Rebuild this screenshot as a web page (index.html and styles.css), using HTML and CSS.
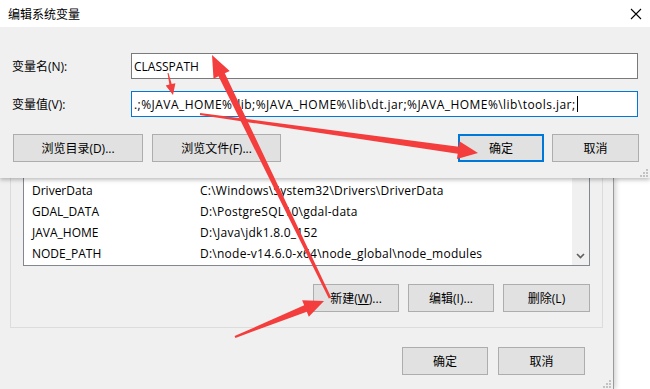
FILE: index.html
```html
<!DOCTYPE html>
<html lang="zh-CN">
<head>
  <meta charset="UTF-8" />
  <title>编辑系统变量</title>
  <link rel="stylesheet" href="styles.css">
</head>
<body>

  <div class="front">
    <div class="titlebar">
      <span class="title">编辑系统变量</span>
      <svg class="close" width="20" height="20" viewBox="0 0 20 20">
        <path d="M5 5 L15 15 M15 5 L5 15" stroke="#000" stroke-width="1.1" fill="none" />
      </svg>
    </div>
    <div class="dlg-body">
      <div class="fields">
        <div class="field">
          <span class="label">变量名(N):</span>
          <div class="input">CLASSPATH</div>
        </div>
        <div class="field">
          <span class="label">变量值(V):</span>
          <div class="input focus">.;%JAVA_HOME%\lib;%JAVA_HOME%\lib\dt.jar;%JAVA_HOME%\lib\tools.jar;<span class="caret"></span></div>
        </div>
      </div>
      <div class="btn-row">
        <div class="btn-group">
          <button class="btn w130">浏览目录(D)...</button>
          <button class="btn w129">浏览文件(F)...</button>
        </div>
        <div class="btn-group tight">
          <button class="btn w86 default">确定</button>
          <button class="btn w87">取消</button>
        </div>
      </div>
      <svg class="grip" width="9" height="9" viewBox="0 0 9 9">
        <rect x="6" y="0" width="2" height="2" fill="#c2c2c2" />
        <rect x="3" y="3" width="2" height="2" fill="#c2c2c2" />
        <rect x="6" y="3" width="2" height="2" fill="#c2c2c2" />
        <rect x="0" y="6" width="2" height="2" fill="#c2c2c2" />
        <rect x="3" y="6" width="2" height="2" fill="#c2c2c2" />
        <rect x="6" y="6" width="2" height="2" fill="#c2c2c2" />
      </svg>
    </div>
  </div>

  <div class="back">
    <div class="window">
      <div class="group">
        <div class="list">
          <div class="rows">
            <div class="row"><span class="name">DriverData</span><span class="path">C:\Windows\System32\Drivers\DriverData</span></div>
            <div class="row"><span class="name">GDAL_DATA</span><span class="path">D:\PostgreSQL10\gdal-data</span></div>
            <div class="row"><span class="name">JAVA_HOME</span><span class="path">D:\Java\jdk1.8.0_152</span></div>
            <div class="row"><span class="name">NODE_PATH</span><span class="path">D:\node-v14.6.0-x64\node_global\node_modules</span></div>
          </div>
          <div class="scrollbar">
            <svg width="17" height="17" viewBox="0 0 17 17">
              <path d="M5 7 L8.5 10.5 L12 7" stroke="#606060" stroke-width="1.6" fill="none" />
            </svg>
          </div>
        </div>
        <div class="list-actions">
          <button class="btn w86">新建(<u>W</u>)...</button>
          <button class="btn w86">编辑(I)...</button>
          <button class="btn w87">删除(L)</button>
        </div>
      </div>
      <div class="footer">
        <button class="btn w86">确定</button>
        <button class="btn w87">取消</button>
      </div>
      <svg class="grip" width="9" height="9" viewBox="0 0 9 9">
        <rect x="6" y="0" width="2" height="2" fill="#c2c2c2" />
        <rect x="3" y="3" width="2" height="2" fill="#c2c2c2" />
        <rect x="6" y="3" width="2" height="2" fill="#c2c2c2" />
        <rect x="0" y="6" width="2" height="2" fill="#c2c2c2" />
        <rect x="3" y="6" width="2" height="2" fill="#c2c2c2" />
        <rect x="6" y="6" width="2" height="2" fill="#c2c2c2" />
      </svg>
    </div>
    <div class="desk"></div>
  </div>

  <!-- red annotation arrows drawn over the screenshot -->
  <svg class="arrows" width="650" height="389" viewBox="0 0 650 389">
    <polygon points="328.8,298.6 218.5,76.3 213.5,78.7 212,55 229.7,70.9 224.8,73.3 331.2,297.4" />
    <polygon points="200.1,113 458.7,146.8 459.4,141.3 478,153 456.9,159.1 457.7,153.7 199.9,115" />
    <polygon points="234.6,336.1 304.2,305.3 302.1,300.2 324,301 308.8,316.8 306.8,311.7 235.4,337.9" />
    <polygon points="168.5,72.9 171.7,84 175.4,83.2 173,95 165.7,85.4 169.4,84.5 167.5,73.1" />
  </svg>

</body>
</html>
```

FILE: styles.css
```css
body {
  margin: 0;
  width: 650px;
  height: 389px;
  overflow: hidden;
  position: relative;
  background-color: #fff;
  font-family: "Open Sans", "Noto Sans CJK SC", sans-serif;
  font-size: 12px;
  color: #000;
}

.front {
  position: relative;
  z-index: 1;
  background-color: #f0f0f0;
  box-shadow: 0 2px 4px rgba(0, 0, 0, 0.25);
}

.titlebar {
  height: 27px;
  background-color: #fff;
  display: flex;
  align-items: center;
  justify-content: space-between;
  padding-left: 8px;
}

.close {
  margin-right: 4px;
}

.dlg-body {
  position: relative;
  height: 151px;
  box-sizing: border-box;
  padding-top: 26px;
}

.fields {
  display: flex;
  flex-direction: column;
  gap: 12px;
  padding: 0 12px;
}

.field {
  display: flex;
  align-items: center;
}

.label {
  width: 119px;
}

.input {
  flex: 1;
  height: 26px;
  box-sizing: border-box;
  border: 1px solid #7a7a7a;
  background-color: #fff;
  padding-left: 2px;
  display: flex;
  align-items: center;
  white-space: nowrap;
  overflow: hidden;
}

.input.focus {
  border-color: #0078d7;
  letter-spacing: 0.45px;
}

.caret {
  display: inline-block;
  width: 1px;
  height: 16px;
  margin-left: 1px;
  background-color: #000;
}

.btn-row {
  display: flex;
  justify-content: space-between;
  margin-top: 17px;
  padding: 0 11px 0 13px;
}

.btn-group {
  display: flex;
  gap: 9px;
}

.btn-group.tight {
  gap: 8px;
}

.btn {
  height: 28px;
  box-sizing: border-box;
  border: 1px solid #adadad;
  background-color: #e1e1e1;
  font: inherit;
  color: #000;
  padding: 0;
  display: flex;
  align-items: center;
  justify-content: center;
}

.btn.default {
  border: 2px solid #0078d7;
}

.w130 { width: 130px; }
.w129 { width: 129px; }
.w86 { width: 86px; }
.w87 { width: 87px; }

.grip {
  position: absolute;
  right: 1px;
  bottom: 0;
}

.back {
  display: flex;
  height: 211px;
}

.window {
  position: relative;
  width: 613px;
  flex-shrink: 0;
  background-color: #f0f0f0;
  border-right: 1px solid #9a9a9a;
  box-shadow: 2px 0 5px rgba(0, 0, 0, 0.18);
}

.desk {
  flex: 1;
  background-color: #fff;
}

.group {
  margin-left: 10px;
  width: 593px;
  box-sizing: border-box;
  border: 1px solid #dcdcdc;
  border-top: 0;
  padding: 0 12px 15px 12px;
}

.list {
  display: flex;
  width: 567px;
  box-sizing: border-box;
  border: 1px solid #828790;
  border-top: 0;
  background-color: #fff;
}

.rows {
  flex: 1;
  padding: 2px 0 1px;
}

.row {
  display: flex;
  align-items: center;
  height: 21px;
  padding-left: 8px;
  white-space: nowrap;
}

.name {
  width: 168px;
}

.path {
  letter-spacing: 0.25px;
}

.scrollbar {
  width: 17px;
  background-color: #f0f0f0;
  display: flex;
  align-items: flex-end;
}

.scrollbar svg {
  display: block;
  margin-bottom: 1px;
}

.list-actions {
  display: flex;
  justify-content: flex-end;
  gap: 9px;
  margin-top: 18px;
}

.footer {
  display: flex;
  justify-content: flex-end;
  gap: 10px;
  margin-top: 19px;
  padding-right: 28px;
}

.arrows {
  position: absolute;
  left: 0;
  top: 0;
  z-index: 2;
  pointer-events: none;
}

.arrows polygon {
  fill: #f43d3d;
}
```
